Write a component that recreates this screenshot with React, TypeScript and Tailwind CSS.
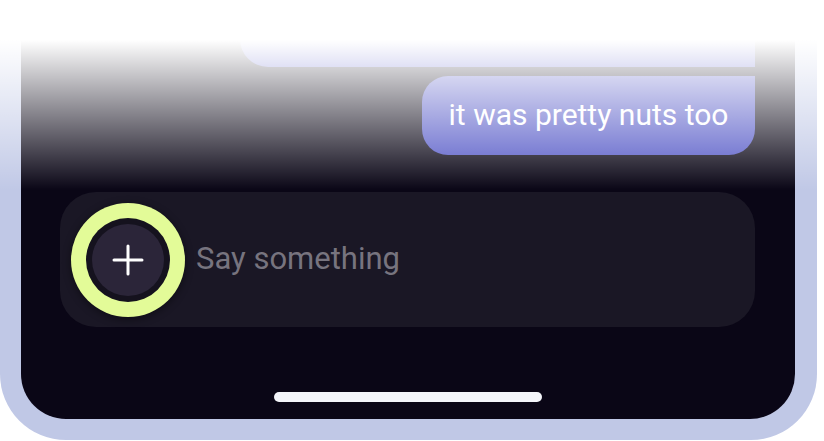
export default function App() {
  return (
    <div className="relative h-[441px] w-[824px] overflow-hidden bg-white font-['Roboto',sans-serif]">
      {/* phone body */}
      <div className="flex h-[440px] w-[817px] flex-col rounded-b-[66px] bg-[#c0c8e6] pb-[21px] pl-[21px] pr-[22px]">
        {/* screen */}
        <div className="flex flex-1 flex-col justify-end overflow-hidden rounded-b-[45px] bg-[#0a0616] pb-[17px] pl-[39px] pr-[40px]">
          <div className="h-[80px] w-[515px] shrink-0 self-end rounded-l-[28px] bg-[#5256c6]" />
          <div className="mt-[9px] flex h-[79px] w-[333px] shrink-0 items-center justify-center self-end rounded-[26px] rounded-tr-none bg-[#5256c6] pb-[2px] text-[30px] text-white">
            it was pretty nuts too
          </div>

          <div className="mt-[37px] flex h-[135px] shrink-0 items-center gap-[11px] rounded-[36px] bg-[#1a1725] pl-[11px]">
            <div className="size-[114px] rounded-full bg-[#e3fb98] p-[15px] shadow-[0_2px_8px_rgba(0,0,0,0.45)]">
              <div className="size-full rounded-full bg-[#15121e] p-[6px]">
                <button className="flex size-full items-center justify-center rounded-full bg-[#2b2539]">
                  <svg width="32" height="32" viewBox="0 0 32 32" fill="none" stroke="white" strokeWidth="3" strokeLinecap="round">
                    <line x1="16" y1="2" x2="16" y2="30" />
                    <line x1="2" y1="16" x2="30" y2="16" />
                  </svg>
                </button>
              </div>
            </div>
            <span className="text-[31px] text-[#77747f]">Say something</span>
          </div>

          <div className="mt-[65px] h-[10px] w-[268px] shrink-0 self-center rounded-full bg-[#f4f5fa]" />
        </div>
      </div>

      {/* top fade */}
      <div className="pointer-events-none absolute inset-0 bg-[linear-gradient(to_bottom,#fff_40px,rgba(255,255,255,0)_190px)]" />
    </div>
  );
}
